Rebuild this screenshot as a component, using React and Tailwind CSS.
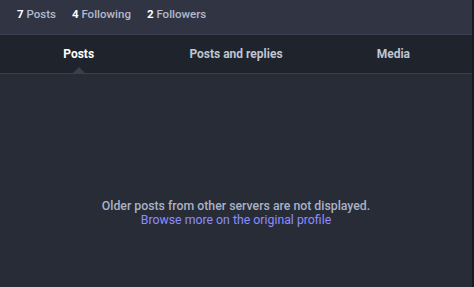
const stats = [
  { n: 7, label: "Posts" },
  { n: 4, label: "Following" },
  { n: 2, label: "Followers" },
];

const tabs = ["Posts", "Posts and replies", "Media"];

export default function App() {
  return (
    <div className="flex h-[287px] w-[474px] bg-[#191b22] font-['Roboto',sans-serif]">
      <div className="flex w-[472px] flex-col bg-[#282c37]">
        <div className="flex h-[35px] items-center gap-[16px] border-b border-[#393f4f] bg-[#313543] pb-[5px] pl-[17px] text-[11.5px]">
          {stats.map((s) => (
            <span key={s.label} className="font-medium text-[#b3bacb]">
              <span className="font-bold text-white">{s.n}</span> {s.label}
            </span>
          ))}
        </div>
        <div className="flex h-[39px] border-b border-[#393f4f] bg-[#1f232b] pb-[1px]">
          {tabs.map((t, i) => (
            <div
              key={t}
              className={
                "relative flex flex-1 items-center justify-center text-[12px] font-bold " +
                (i === 0 ? "text-white" : "text-[#bfc5d2]")
              }
            >
              {t}
              {i === 0 && (
                <span className="absolute bottom-[-2px] left-1/2 h-0 w-0 -translate-x-1/2 border-x-[7px] border-b-[7px] border-x-transparent border-b-[#393f4f]" />
              )}
            </div>
          ))}
        </div>
        <div className="flex flex-1 flex-col items-center pt-[125px] text-center text-[12.3px] leading-[14px]">
          <p className="font-medium text-[#aab2c5]">Older posts from other servers are not displayed.</p>
          <p className="text-[#8c8dff]">Browse more on the original profile</p>
        </div>
      </div>
    </div>
  );
}
